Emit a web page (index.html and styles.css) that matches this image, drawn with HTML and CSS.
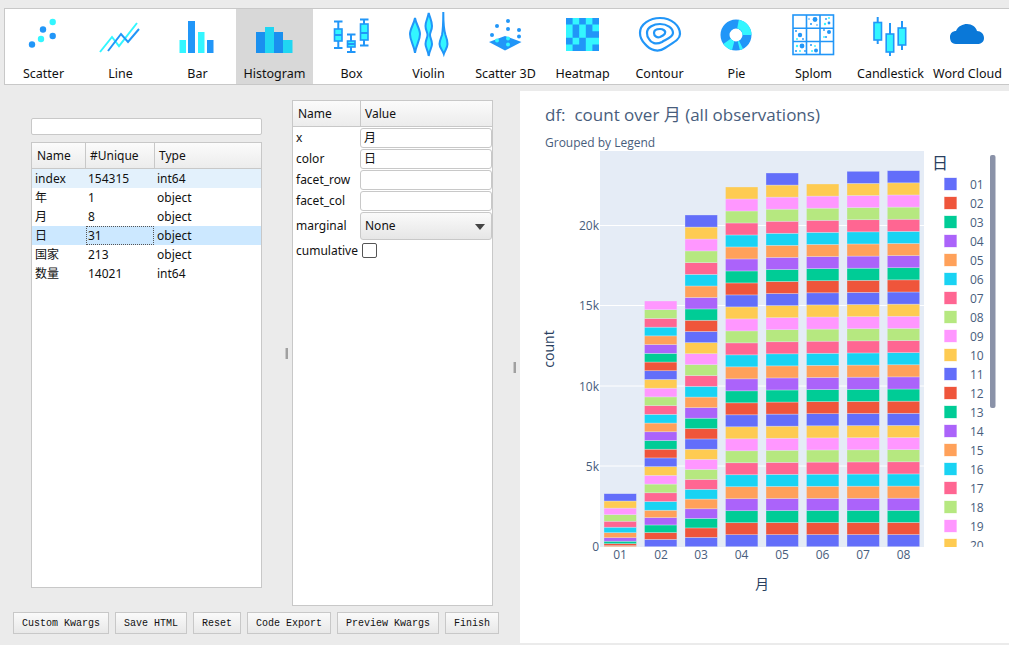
FILE: index.html
```html
<!DOCTYPE html>
<html lang="en">
<head>
<meta charset="utf-8">
<title>Plotly Express</title>
<link rel="stylesheet" href="styles.css">
</head>
<body>
<nav class="toolbar">
  <div class="tool">
    <svg class="icon" viewBox="5 9 77 50"><g class="b"><circle cx="32" cy="44.5" r="3.2"/><circle cx="43" cy="29.5" r="3.2"/><circle cx="52.7" cy="36" r="3.2"/></g><g class="c"><circle cx="41" cy="39" r="3.2"/><circle cx="52.7" cy="22" r="3.2"/></g></svg>
    <span>Scatter</span>
  </div>
  <div class="tool">
    <svg class="icon" viewBox="82 9 77 50"><polyline class="lc" points="100,52 112,37 119,46 137,23"/><polyline class="lb" points="108,51 121,34 128,42 139,29"/></svg>
    <span>Line</span>
  </div>
  <div class="tool">
    <svg class="icon" viewBox="159 9 77 50"><rect class="c" x="179.5" y="40" width="6.5" height="13"/><rect class="b" x="188" y="21" width="7" height="32"/><rect class="c" x="198" y="32" width="6.5" height="21"/><rect class="b" x="207" y="40" width="6.5" height="13"/></svg>
    <span>Bar</span>
  </div>
  <div class="tool active">
    <svg class="icon" viewBox="236 9 77 50"><rect class="hb" x="256" y="32" width="9" height="21"/><rect class="hc" x="265" y="27" width="9" height="26"/><rect class="hb" x="274" y="32" width="9" height="21"/><rect class="hc" x="283" y="40" width="9.5" height="13"/></svg>
    <span>Histogram</span>
  </div>
  <div class="tool">
    <svg class="icon" viewBox="313 9 77 50"><g class="box"><path d="M338.300 21.500V48M334 21.500h8.500M334 48h8.500"/><rect x="334.500" y="29" width="7.500" height="12"/><path d="M334 35h8"/><path d="M351 34.500V52M347 34.500h8.500M347 52h8.500"/><rect x="347.500" y="41" width="7.500" height="6"/><path d="M347 44h8"/><path d="M364 19.500V45.500M360 19.500h8.500M360 45.500h8.500"/><rect x="360.500" y="24" width="7.500" height="16"/><path d="M360 33h8"/></g></svg>
    <span>Box</span>
  </div>
  <div class="tool">
    <svg class="icon" viewBox="390 9 77 50"><g class="box"><path d="M415 18C416 24 420 29 420 34C420 41 416 45 415 53C414 45 410 41 410 34C410 29 414 24 415 18Z"/><path d="M428.700 13C430 18 432 21 432 26C432 30 430 32 430 35C430 38 432 40 432 44C432 48 429.500 50 428.700 56C428 50 425.500 48 425.500 44C425.500 40 427.500 38 427.500 35C427.500 32 425.500 30 425.500 26C425.500 21 428 18 428.700 13Z"/><path d="M443.300 12C443.300 22 443.800 30 445.500 35C447 39 447.500 41 447.500 44C447.500 48 445 50 443.800 54C442.500 50 439.500 48 439.500 44C439.500 41 441 38 442 35C443 30 443.300 22 443.300 12Z"/></g></svg>
    <span>Violin</span>
  </div>
  <div class="tool">
    <svg class="icon" viewBox="467 9 77 50"><path class="b" d="M489 42L505 36L521.500 42L505 50.500Z"/><g class="c"><circle cx="497" cy="40.500" r="2"/><circle cx="508" cy="38.500" r="2"/><circle cx="508" cy="44.500" r="2"/></g><g class="b"><circle cx="492" cy="35" r="2"/><circle cx="497" cy="26" r="2"/><circle cx="508" cy="21" r="2"/><circle cx="508" cy="29" r="2"/><circle cx="519" cy="30" r="2"/><circle cx="519" cy="36.500" r="2"/></g></svg>
    <span>Scatter 3D</span>
  </div>
  <div class="tool">
    <svg class="icon" viewBox="544 9 77 50"><rect class="c" x="566" y="18" width="33" height="33"/><path class="b" d="M566 18h6.600v6.600h-6.600zM579.200 18h6.600v6.600h-6.600zM592.400 18h6.600v6.600h-6.600zM572.600 24.600h6.600v6.600h-6.600zM585.800 24.600h6.600v6.600h-6.600zM572.600 31.200h6.600v6.600h-6.600zM585.800 31.200h13.200v6.600h-13.200zM566 37.800h6.600v6.600h-6.600zM579.200 37.800h6.600v6.600h-6.600zM572.600 44.400h13.200v6.600h-13.200zM592.400 44.400h6.600v6.600h-6.600z"/></svg>
    <span>Heatmap</span>
  </div>
  <div class="tool">
    <svg class="icon" viewBox="621 9 77 50"><g class="contour"><path d="M640 33C640 24 650 18 660 18C672 18 680 26 680 34C680 40 672 43 665 48C658 53 650 50 645 44C641 40 640 37 640 33Z"/><path d="M647 33C647 27 654 24 660 24C667 24 673 28 673 33C673 37 667 39 662 42C656 45 651 43 649 39C647 37 647 35 647 33Z"/><path d="M654 33C654 30 657 29 660 29C663 29 666 31 665 33C665 35 662 36 660 37C657 38 654 36 654 33Z"/></g></svg>
    <span>Contour</span>
  </div>
  <div class="tool">
    <svg class="icon" viewBox="698 9 77 50"><circle class="ring-b" cx="736" cy="35" r="11"/><path class="ring-c" d="M738 24.200A11 11 0 0 1 747 35"/><path class="ring-c" d="M727 41.300A11 11 0 0 0 733.200 45.600"/><path class="ring-c" d="M738.800 45.600A11 11 0 0 0 741 44.800"/></svg>
    <span>Pie</span>
  </div>
  <div class="tool">
    <svg class="icon" viewBox="775 9 77 50"><g class="grid"><rect x="793" y="15" width="40.500" height="39.500"/><path d="M806.500 15V54.500M820 15V54.500M793 28.200H833.500M793 41.500H833.500"/></g><g class="b"><circle cx="815" cy="19.500" r="2.400"/><circle cx="811" cy="24" r="1"/><circle cx="809" cy="19" r=".8"/><circle cx="817" cy="25" r=".8"/><circle cx="829" cy="23" r="1.400"/><circle cx="826" cy="19" r=".9"/><circle cx="800" cy="35" r="2.200"/><circle cx="796" cy="31" r="1"/><circle cx="803" cy="39" r=".9"/><circle cx="829" cy="32" r="2"/><circle cx="824" cy="30" r=".9"/><circle cx="826" cy="37" r="1"/><circle cx="802" cy="46" r="2.400"/><circle cx="796" cy="51" r="1"/><circle cx="805" cy="51" r=".9"/><circle cx="816" cy="50.500" r="2"/><circle cx="811" cy="45" r="1"/></g><g class="c"><circle cx="829" cy="18" r="1"/><circle cx="825" cy="24" r="1.200"/><circle cx="797" cy="39" r="1"/><circle cx="824" cy="37" r=".9"/><circle cx="797" cy="46" r="1.200"/><circle cx="800" cy="51" r="1"/><circle cx="812" cy="51" r="1"/><circle cx="815" cy="46" r=".9"/></g></svg>
    <span>Splom</span>
  </div>
  <div class="tool">
    <svg class="icon" viewBox="852 9 77 50"><g class="box"><path d="M877.700 17V44"/><rect x="874" y="22.500" width="7.500" height="17.500"/><path d="M890 23V56"/><rect x="886.200" y="34" width="7.500" height="18"/><path d="M902 21V50"/><rect x="898.200" y="28" width="7.500" height="17"/></g></svg>
    <span>Candlestick</span>
  </div>
  <div class="tool">
    <svg class="icon" viewBox="929 9 77 50"><path class="cloud" d="M956 44C951 44 950 40 950 37C950 33 953 31 956 31C958 26 963 24 967 24C972 24 976 27 977 31C981 31 984 34 984 38C984 42 981 44 977 44Z"/></svg>
    <span>Word Cloud</span>
  </div>
</nav>

<main class="workspace">
  <section class="controls">
    <div class="panes">
      <div class="left-pane">
        <input class="filter" type="text" aria-label="Filter">
        <div class="table columns-table">
          <div class="thead">
            <div class="th">Name</div><div class="th">#Unique</div><div class="th">Type</div>
          </div>
          <div class="tr tint"><div>index</div><div>154315</div><div>int64</div></div>
          <div class="tr"><div>年</div><div>1</div><div>object</div></div>
          <div class="tr"><div>月</div><div>8</div><div>object</div></div>
          <div class="tr selected"><div>日</div><div class="focus">31</div><div>object</div></div>
          <div class="tr"><div>国家</div><div>213</div><div>object</div></div>
          <div class="tr"><div>数量</div><div>14021</div><div>int64</div></div>
        </div>
      </div>
      <div class="split"><i class="handle"></i></div>
      <div class="table args-table">
        <div class="thead">
          <div class="th">Name</div><div class="th">Value</div>
        </div>
        <div class="arg"><label>x</label><div class="field">月</div></div>
        <div class="arg"><label>color</label><div class="field">日</div></div>
        <div class="arg"><label>facet_row</label><div class="field"></div></div>
        <div class="arg"><label>facet_col</label><div class="field"></div></div>
        <div class="arg tall"><label>marginal</label><div class="field combo">None<b class="arrow"></b></div></div>
        <div class="arg"><label>cumulative</label><i class="check"></i></div>
      </div>
    </div>
    <div class="buttons">
      <button>Custom Kwargs</button>
      <button>Save HTML</button>
      <button>Reset</button>
      <button>Code Export</button>
      <button>Preview Kwargs</button>
      <button>Finish</button>
    </div>
  </section>
  <div class="split2"><i class="handle"></i></div>
  <section class="chart">
    <svg id="plot" class="plot" viewBox="520 91 489 552">
      <defs><clipPath id="legend-clip"><rect x="925" y="150" width="84" height="397"/></clipPath></defs>
      <text class="title" x="545" y="120.500" xml:space="preserve">df:  count over 月 (all observations)</text>
      <text class="sub" x="545" y="147">Grouped by Legend</text>
      <rect class="bg" x="600" y="151" width="324" height="396"/>
      <g class="gridlines"><path d="M600 225.500H924M600 305.500H924M600 386H924M600 466H924"/></g>
      <g id="bars"></g>
      <g class="tick ticky"><text x="599" y="230">20k</text><text x="599" y="310">15k</text><text x="599" y="390.500">10k</text><text x="599" y="471">5k</text><text x="599" y="551">0</text></g>
      <g class="tick tickx"><text x="620" y="559">01</text><text x="661" y="559">02</text><text x="701" y="559">03</text><text x="741.500" y="559">04</text><text x="782" y="559">05</text><text x="822.500" y="559">06</text><text x="863" y="559">07</text><text x="903.500" y="559">08</text></g>
      <text class="axis" x="762" y="589">月</text>
      <text class="axis" transform="translate(554 349) rotate(-90)">count</text>
      <text class="legend-title" x="932" y="169">日</text>
      <g id="legend" clip-path="url(#legend-clip)"></g>
      <rect class="scroll" x="990" y="155" width="5.500" height="253" rx="2"/>
    </svg>
  </section>
</main>
<script src="script.js"></script>
</body>
</html>
```
FILE: styles.css
```css
* { box-sizing: border-box; }
html, body { margin: 0; height: 100%; }
body {
  background: #ebebeb;
  font: 12px "Noto Sans", "Noto Sans CJK SC", sans-serif;
  color: #111;
  overflow: hidden;
  padding-top: 8px;
}
.toolbar {
  display: flex;
  height: 77px;
  margin-left: 4px;
  background: #fff;
  border: 1px solid #c8c8c8;
  border-right: 0;
}
.tool {
  width: 77px;
  flex: none;
  display: flex;
  flex-direction: column;
  align-items: center;
  white-space: nowrap;
  font-size: 12.5px;
}
.tool.active { background: #d8d8d8; }
.tool span { line-height: 17px; margin-top: 6px; }
.icon { width: 77px; height: 50px; display: block; flex: none; }
.b { fill: #2196f8; }
.c { fill: #33f6ff; }
.hb { fill: #1a90ef; }
.hc { fill: #20d6f2; }
.lb, .lc { fill: none; stroke-width: 2; }
.lb { stroke: #2196f8; }
.lc { stroke: #33f6ff; }
.box path { fill: none; stroke: #2196f8; stroke-width: 2; }
.box rect { fill: #33f6ff; stroke: #2196f8; stroke-width: 1.6; }
.box > path[d$="Z"] { fill: #33f6ff; }
.contour path { fill: none; stroke: #2196f8; stroke-width: 2.2; }
.ring-b { fill: none; stroke: #2196f8; stroke-width: 9; }
.ring-c { fill: none; stroke: #33f6ff; stroke-width: 9; }
.grid rect, .grid path { fill: none; stroke: #2196f8; stroke-width: 1.6; }
.cloud { fill: #0a78d8; }

.workspace { display: flex; height: 552px; margin-top: 6px; }
.controls { width: 499px; flex: none; padding-top: 9px; display: flex; flex-direction: column; }
.panes { display: flex; height: 506px; padding-left: 31px; }
.left-pane { width: 231px; flex: none; padding-top: 18px; display: flex; flex-direction: column; gap: 7px; height: 488px; }
.filter { height: 17px; border: 1px solid #c8c8c8; border-radius: 2px; background: #fff; display: block; width: 100%; padding: 0; }
.table { background: #fff; border: 1px solid #c8c8c8; }
.columns-table { height: 446px; }
.thead {
  display: flex;
  height: 26px;
  align-items: stretch;
  background: linear-gradient(#fbfbfb, #ececec);
  border-bottom: 1px solid #c8c8c8;
}
.th { display: flex; align-items: center; padding-left: 4px; border-right: 1px solid #c8c8c8; }
.th:last-child { border-right: 0; flex: 1; }
.columns-table .th:nth-child(1) { width: 54px; padding-left: 5px; }
.columns-table .th:nth-child(2) { width: 69px; }
.tr { display: flex; height: 19px; align-items: center; }
.tr > div { padding-left: 3px; line-height: 17px; }
.tr > div:nth-child(1) { width: 54px; }
.tr > div:nth-child(2) { width: 68px; padding-left: 1px; border: 1px dotted transparent; height: 19px; }
.tr > div:nth-child(3) { padding-left: 3px; }
.tint { background: #e3f1fc; }
.selected { background: #cce8ff; }
.tr > div.focus { border-color: #555; }
.split { width: 30px; flex: none; display: flex; align-items: center; padding-left: 23px; }
.split2 { width: 21px; flex: none; display: flex; align-items: center; padding-left: 14px; }
.handle { width: 3px; height: 11px; background: #a0a0a0; border-left: 1px solid #c8c8c8; display: block; }
.args-table { width: 201px; flex: none; height: 506px; }
.args-table .th:first-child { width: 68px; padding-left: 5px; }
.args-table .th:last-child { padding-left: 4px; }
.arg { display: flex; height: 21px; align-items: center; }
.arg.tall { height: 29px; }
.arg label { width: 67px; padding-left: 3px; flex: none; }
.field {
  flex: none;
  width: 132px;
  height: 20px;
  border: 1px solid #c8c8c8;
  border-radius: 3px;
  background: #fff;
  padding-left: 3px;
  line-height: 18px;
}
.combo {
  height: 28px;
  line-height: 26px;
  padding-left: 4px;
  position: relative;
  background: linear-gradient(#fafafa, #e6e6e6);
}
.arrow {
  position: absolute;
  right: 6px;
  top: 11px;
  border: 5.500px solid transparent;
  border-top: 6px solid #444;
  border-bottom: 0;
}
.check { width: 15.500px; height: 15.500px; border: 1px solid #555; border-radius: 2px; background: #fff; margin-left: 1.500px; display: block; }
.buttons { display: flex; gap: 6px; padding: 6px 0 0 13px; }
.buttons button {
  height: 22px;
  padding: 0 8px;
  border: 1px solid #c8c8c8;
  background: linear-gradient(#fafafa, #e8e8e8);
  font: 10px "Liberation Mono", monospace;
  color: #111;
  white-space: pre;
}
.chart { width: 489px; flex: none; background: #fff; }
.plot { display: block; width: 489px; height: 552px; font-family: "Open Sans", "Noto Sans CJK SC", sans-serif; }
.title { font-size: 17px; fill: #485d7c; }
.sub { font-size: 12px; fill: #485d7c; }
.bg { fill: #e5ecf6; }
.gridlines path { stroke: #fff; stroke-width: 1; fill: none; }
.tick text { font-size: 12px; fill: #485d7c; }
.ticky text { text-anchor: end; }
.tickx text { text-anchor: middle; }
.axis { font-size: 14px; fill: #2a3f5f; text-anchor: middle; }
.legend-title { font-size: 16px; fill: #2a3f5f; }
.legend-label { font-size: 12px; fill: #485d7c; }
.scroll { fill: #8a92a8; }
.seg { stroke: #e5ecf6; stroke-opacity: .55; stroke-width: .6; }
```
FILE: script.js
```js
(function () {
  var NS = "http://www.w3.org/2000/svg";
  var COLORS = ["#636efa", "#ef553b", "#00cc96", "#ab63fa", "#ffa15a", "#19d3f3", "#ff6692", "#b6e880", "#ff97ff", "#fecb52"];
  var BASE = 546.7;

  function el(name, attrs, text) {
    var node = document.createElementNS(NS, name);
    for (var key in attrs) node.setAttribute(key, attrs[key]);
    if (text) node.textContent = text;
    return node;
  }

  function fit(raw, barTop) {
    var sum = raw.reduce(function (a, b) { return a + b; }, 0);
    var scale = (BASE - barTop) / sum;
    return raw.map(function (h) { return h * scale; });
  }

  function ramp(days, first, last, barTop) {
    var raw = [];
    for (var i = 0; i < days; i++) raw.push(first + (last - first) * i / (days - 1));
    return fit(raw, barTop);
  }

  var febRaw = [7.3, 6.8, 7.6, 7.3, 7.4];
  for (var f = 5; f < 29; f++) febRaw.push(8.7);

  var MONTHS = [
    { x: 604, sliver: true, heights: [1, 2, 2.5, 3.5, 5, 5.5, 6, 6.5, 6.6, 7.1, 7.3] },
    { x: 644.5, heights: fit(febRaw, 301) },
    { x: 685, heights: ramp(31, 9.3, 12, 215) },
    { x: 725.5, heights: ramp(30, 12, 12, 187) },
    { x: 766, heights: ramp(31, 12, 12, 173) },
    { x: 806.5, heights: ramp(30, 12, 12, 184) },
    { x: 847, heights: ramp(31, 12, 12, 171.3) },
    { x: 887.3, heights: ramp(31, 12, 12, 170.7) }
  ];

  var bars = document.getElementById("bars");
  MONTHS.forEach(function (month) {
    var y = BASE;
    month.heights.forEach(function (h, i) {
      y -= h;
      var color = month.sliver && i === 0 ? "#ffa15a" : COLORS[i % 10];
      bars.appendChild(el("rect", { "class": "seg", x: month.x, y: y.toFixed(2), width: 32.4, height: h.toFixed(2), fill: color }));
    });
  });

  var legend = document.getElementById("legend");
  for (var d = 0; d < 20; d++) {
    var rowTop = 178 + d * 19;
    legend.appendChild(el("rect", { x: 944.5, y: rowTop, width: 12, height: 12, fill: COLORS[d % 10], stroke: COLORS[d % 10], "stroke-opacity": 0.3 }));
    legend.appendChild(el("text", { "class": "legend-label", x: 970, y: rowTop + 10.5 }, (d < 9 ? "0" : "") + (d + 1)));
  }
})();
```
